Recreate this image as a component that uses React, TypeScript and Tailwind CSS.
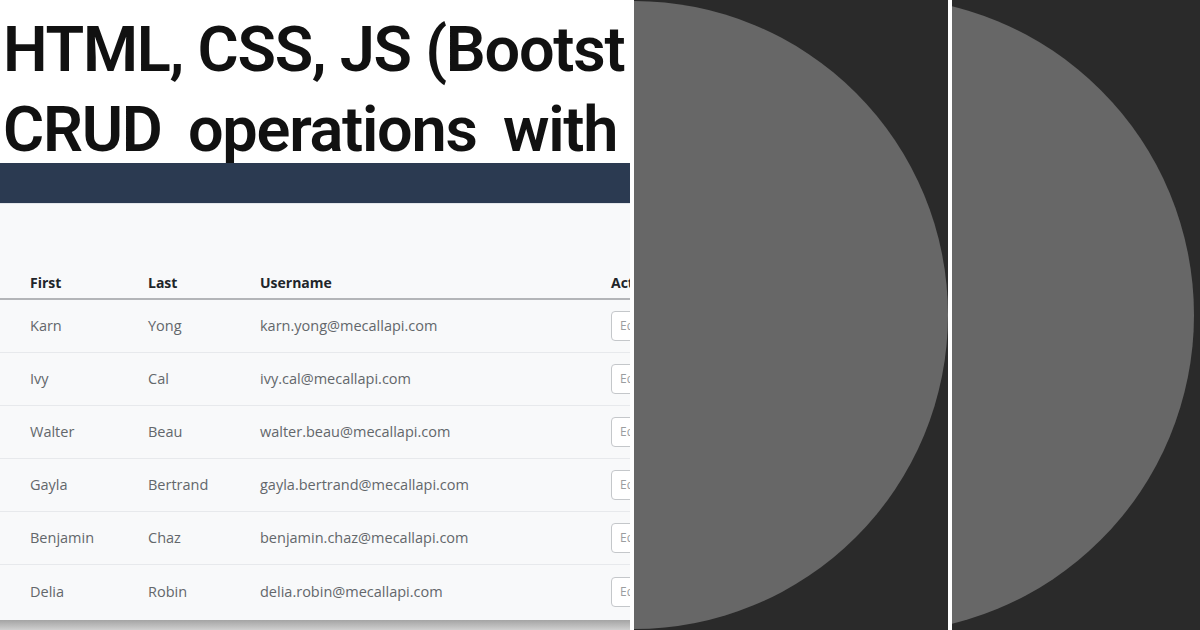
const users = [
  { first: 'Karn', last: 'Yong', username: 'karn.yong@mecallapi.com' },
  { first: 'Ivy', last: 'Cal', username: 'ivy.cal@mecallapi.com' },
  { first: 'Walter', last: 'Beau', username: 'walter.beau@mecallapi.com' },
  { first: 'Gayla', last: 'Bertrand', username: 'gayla.bertrand@mecallapi.com' },
  { first: 'Benjamin', last: 'Chaz', username: 'benjamin.chaz@mecallapi.com' },
  { first: 'Delia', last: 'Robin', username: 'delia.robin@mecallapi.com' },
];

function Slide({ cx, r }: { cx: number; r: number }) {
  return (
    <svg className="block h-full w-full" viewBox="0 0 314 630" preserveAspectRatio="xMinYMid slice">
      <circle cx={cx} cy={315} r={r} fill="#676767" />
    </svg>
  );
}

export default function App() {
  return (
    <div className="flex h-[630px] w-[1200px] overflow-hidden bg-white">
      {/* Screenshot panel */}
      <div className="flex w-[630px] shrink-0 flex-col overflow-hidden bg-white">
        <div className="h-[163px] shrink-0 whitespace-nowrap pl-[3px] pt-[10px] font-['Roboto',sans-serif] text-[63px] font-semibold leading-[80px] tracking-[-0.02em] text-[#111]">
          <div>HTML, CSS, JS (Bootst</div>
          <div className="[word-spacing:12px]">CRUD operations with</div>
        </div>
        <div className="h-[40px] shrink-0 bg-[#2b3a51]" />

        <div className="flex-1 border-t border-[#e3e6ea] bg-[#f8f9fa] font-['Open_Sans',sans-serif] text-[14px]">
          <div className="flex h-[96px] items-end whitespace-nowrap border-b-2 border-[#b3b5b8] pb-[5px] pl-[30px] font-bold text-[#212529]">
            <div className="w-[118px] shrink-0">First</div>
            <div className="w-[112px] shrink-0">Last</div>
            <div className="w-[351px] shrink-0">Username</div>
            <div className="shrink-0">Action</div>
          </div>
          {users.map((u, i) => (
            <div
              key={u.username}
              className={`flex h-[53px] items-center whitespace-nowrap pl-[30px] text-[14.5px] text-[#63676b] ${
                i < users.length - 1 ? 'border-b border-[#e7e9ec]' : ''
              }`}
            >
              <div className="w-[118px] shrink-0">{u.first}</div>
              <div className="w-[112px] shrink-0">{u.last}</div>
              <div className="w-[351px] shrink-0">{u.username}</div>
              <div className="flex h-[30px] shrink-0 items-center rounded-[4px] border border-[#c4c7ca] bg-white px-[8px] text-[12px] text-[#9a9da0]">
                Edit
              </div>
            </div>
          ))}
        </div>
        <div className="h-[10px] shrink-0 bg-gradient-to-b from-[#a4a4a4] to-[#cfcfcf]" />
      </div>

      <div className="w-[4px] shrink-0 bg-white" />

      <div className="w-[314px] shrink-0 overflow-hidden bg-[#2a2a2a]">
        <Slide cx={0} r={314} />
      </div>

      <div className="w-[4px] shrink-0 bg-white" />

      <div className="flex-1 overflow-hidden bg-[#2a2a2a]">
        <Slide cx={-76} r={318} />
      </div>
    </div>
  );
}
